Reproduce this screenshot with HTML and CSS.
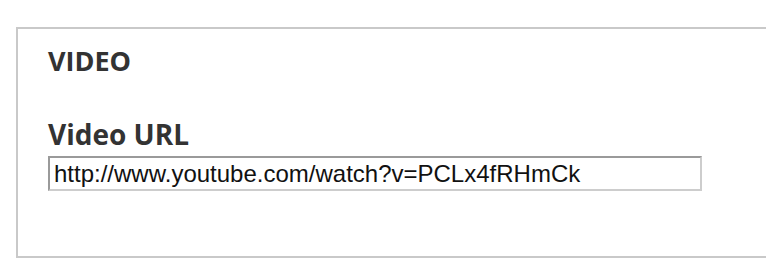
FILE: index.html
```html
<!DOCTYPE html>
<html>
<head>
<meta charset="utf-8">
<link rel="stylesheet" href="styles.css">
</head>
<body>
<div class="panel">
  <h2 class="panel-title">VIDEO</h2>
  <label class="field-label" for="url">Video URL</label>
  <input class="text-input" id="url" type="text" value="http://www.youtube.com/watch?v=PCLx4fRHmCk">
</div>
</body>
</html>
```
FILE: styles.css
```css
html, body {
  margin: 0;
  padding: 0;
  background: #ffffff;
}
body {
  padding: 27px 0 0 16px;
  overflow: hidden;
}
.panel {
  box-sizing: border-box;
  height: 231px;
  width: 750px;
  border: 2px solid #c9c9c9;
  border-right: none;
  padding: 0 0 0 30px;
  font-family: "Open Sans", "DejaVu Sans", sans-serif;
  color: #333333;
}
.panel-title {
  margin: 14px 0 0 0;
  font-size: 27px;
  line-height: 36px;
  font-weight: 700;
}
.field-label {
  display: block;
  margin-top: 36px;
  font-size: 28px;
  line-height: 38px;
  font-weight: 700;
}
.text-input {
  display: block;
  box-sizing: border-box;
  margin-top: 3px;
  width: 654px;
  height: 35px;
  border-style: solid;
  border-width: 2px;
  border-color: #9a9a9a #cdcdcd #cdcdcd #9a9a9a;
  padding: 0 4px;
  font-family: "Liberation Sans", Arial, sans-serif;
  font-size: 24px;
  color: #111111;
  background: #ffffff;
  outline: none;
}
```
